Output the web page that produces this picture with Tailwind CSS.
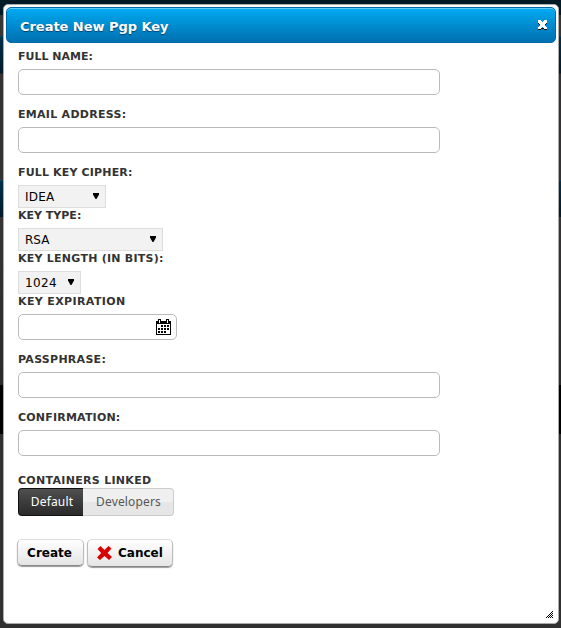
<!DOCTYPE html>
<html lang="en">
<head>
    <meta charset="UTF-8">
    <meta name="viewport" content="width=device-width, initial-scale=1.0">
    <title>Create New Pgp Key</title>
    <script src="https://cdn.jsdelivr.net/npm/@tailwindcss/browser@4"></script>
</head>
<body class="relative h-[628px] w-[561px] overflow-hidden bg-[#2f2f2f] font-['DejaVu_Sans',sans-serif]">
    <!-- Dimmed page behind the dialog -->
    <div class="absolute inset-0 flex flex-col">
        <div class="h-[15px] bg-[#001a26]"></div>
        <div class="h-[21px] bg-[#383634]"></div>
        <div class="h-[37px] border-t border-[#00436a] bg-linear-to-b from-[#00304a] to-[#001a2a]"></div>
        <div class="h-[107px] border-t border-[#222] bg-[#343232]"></div>
        <div class="h-[37px] border-t border-[#00436a] bg-linear-to-b from-[#00304a] to-[#001a2a]"></div>
        <div class="h-[168px] bg-linear-to-b from-[#363434] to-[#2b2b2b]"></div>
        <div class="h-[49px] bg-black"></div>
        <div class="flex-1 bg-[#303030]"></div>
    </div>

    <!-- Dialog -->
    <div class="relative ml-[3px] h-[624px] w-[556px] pt-1">
        <div class="h-[620px] rounded-[5px] border border-[#aaa] bg-white px-0.5 pt-0.5">
            <div class="flex h-9 w-[550px] items-center justify-between rounded-[5px] border border-[#0067a8] bg-linear-to-b from-[#00abf2] to-[#0070b0] pr-[7px] pl-[13px] shadow-[inset_0_1px_0_#62ccf8]">
                <h1 class="pt-[3px] text-[13px] leading-4 font-bold tracking-[-0.04px] text-white [text-shadow:0_1px_1px_#003c66]">Create New Pgp Key</h1>
                <svg class="-mt-px h-[11px] w-[11px]" viewBox="0 0 11 11" shape-rendering="crispEdges">
                    <path fill="#111" d="M1 8h4v1h1V8h4v3H7v-1H4v1H1zM1 3h9v3H1z"/>
                    <path fill="#fff" d="M1 1h3v1h1v1h1V2h1V1h3v3H9v1H8v2h1v1h1v2H7V9H6V8H5v1H4v1H1V8h1V7h1V5H2V4H1z"/>
                    <path fill="#0083c8" d="M1 5h1v2H1zM9 5h1v2H9z"/>
                </svg>
            </div>

            <form class="flex flex-col items-start px-3 pt-[7px] text-[11px] leading-[14px] font-bold text-[#333]">
                <label class="mb-[5px]">FULL NAME:</label>
                <input class="mb-[13px] h-[26px] w-[422px] rounded-[5px] border border-[#bbb]">
                <label class="mb-[5px] tracking-[0.28px]">EMAIL ADDRESS:</label>
                <input class="mb-[13px] h-[26px] w-[422px] rounded-[5px] border border-[#bbb]">

                <label class="mb-[5px] tracking-[0.16px]">FULL KEY CIPHER:</label>
                <div class="mb-px flex h-[23px] w-[88px] items-center justify-between border border-[#ddd] bg-[#f2f2f2] px-1.5 text-[12px] font-normal text-black">
                    <span class="tracking-[0.2px]">IDEA</span>
                    <svg class="-mt-0.5 h-[6px] w-[6px]" viewBox="0 0 6 6"><path d="M0 0h6v1.5L3.5 6h-1L0 1.5z"/></svg>
                </div>
                <label class="mb-[5px]">KEY TYPE:</label>
                <div class="mb-px flex h-[23px] w-[145px] items-center justify-between border border-[#ddd] bg-[#f2f2f2] px-1.5 text-[12px] font-normal text-black">
                    <span>RSA</span>
                    <svg class="-mt-0.5 h-[6px] w-[6px]" viewBox="0 0 6 6"><path d="M0 0h6v1.5L3.5 6h-1L0 1.5z"/></svg>
                </div>
                <label class="mb-[5px] tracking-[0.25px]">KEY LENGTH (IN BITS):</label>
                <div class="mb-px flex h-[23px] w-[63px] items-center justify-between border border-[#ddd] bg-[#f2f2f2] px-1.5 text-[12px] font-normal text-black">
                    <span class="tracking-[0.37px]">1024</span>
                    <svg class="-mt-0.5 h-[6px] w-[6px]" viewBox="0 0 6 6"><path d="M0 0h6v1.5L3.5 6h-1L0 1.5z"/></svg>
                </div>

                <label class="mb-[5px] tracking-[0.38px]">KEY EXPIRATION</label>
                <div class="mb-[13px] flex h-[26px] w-[159px] items-center justify-end rounded-[5px] border border-[#bbb] pr-[5px]">
                    <svg class="h-4 w-[15px]" viewBox="0 0 15 16" shape-rendering="crispEdges">
                        <path d="M0 2h2V0h3v2h5V0h3v2h2v14H0z"/>
                        <path fill="#fff" d="M3 1h1v3H3zM11 1h1v3h-1zM1 5h13v10H1z"/>
                        <path d="M5 6h2v2H5zM8 6h2v2H8zM11 6h2v2h-2zM2 9h2v2H2zM5 9h2v2H5zM8 9h2v2H8zM11 9h2v2h-2zM2 12h2v2H2zM5 12h2v2H5zM8 12h2v2H8z"/>
                    </svg>
                </div>

                <label class="mb-[5px] tracking-[0.28px]">PASSPHRASE:</label>
                <input class="mb-[13px] h-[26px] w-[422px] rounded-[5px] border border-[#bbb]">
                <label class="mb-[5px] tracking-[0.2px]">CONFIRMATION:</label>
                <input class="mb-[18px] h-[26px] w-[422px] rounded-[5px] border border-[#bbb]">

                <label class="tracking-[0.3px]">CONTAINERS LINKED</label>
                <div class="mb-[23px] flex h-7 w-[156px] font-['Noto_Sans',sans-serif] text-[12px] font-normal">
                    <button type="button" class="w-[65px] rounded-l-[4px] border border-r-0 border-[#111] bg-linear-to-b from-[#505050] via-[#3c3c3c] via-50% to-[#2b2b2b] pl-0.5 tracking-[0.15px] text-white">Default</button>
                    <button type="button" class="flex-1 rounded-r-[4px] border border-l-0 border-[#ccc] bg-linear-to-b from-[#f0f0f0] from-50% to-[#e6e6e6] to-50% pl-px tracking-[0.15px] text-[#555]">Developers</button>
                </div>

                <div class="-ml-px flex gap-[3px] text-[12px] font-bold text-black">
                    <button type="button" class="h-[27px] w-[67px] rounded-[5px] border border-[#bbb] border-t-[#ddd] border-b-[#888] bg-linear-to-b from-white to-[#e5e5e5] pr-0.5 shadow-[0_1px_1px_#999]">Create</button>
                    <button type="button" class="flex h-7 w-[86px] items-center rounded-[5px] border border-[#bbb] border-t-[#ddd] border-b-[#888] bg-linear-to-b from-white to-[#e5e5e5] pl-[9px] shadow-[0_1px_1px_#999]">
                        <svg class="mr-1.5 h-[14px] w-[15px]" viewBox="0 0 15 14"><path fill="#d90000" d="M3.5 0 7.5 4 11.5 0 14.5 2.5 10.5 7 15 11 12 14 7.5 10 3 14 0 11.5 4.2 7 .5 3z"/></svg>
                        Cancel
                    </button>
                </div>
            </form>
        </div>

        <!-- Resize grip -->
        <svg class="absolute right-[6px] bottom-[6px] h-[7px] w-[7px]" viewBox="0 0 7 7" shape-rendering="crispEdges">
            <path d="M6 0h1v1H6zM5 1h1v1H5zM4 2h1v1H4zM6 2h1v1H6zM3 3h1v1H3zM5 3h1v1H5zM2 4h1v1H2zM4 4h1v1H4zM6 4h1v1H6zM1 5h1v1H1zM3 5h1v1H3zM5 5h1v1H5zM0 6h1v1H0zM2 6h1v1H2zM4 6h1v1H4zM6 6h1v1H6z"/>
        </svg>
    </div>
</body>
</html>
